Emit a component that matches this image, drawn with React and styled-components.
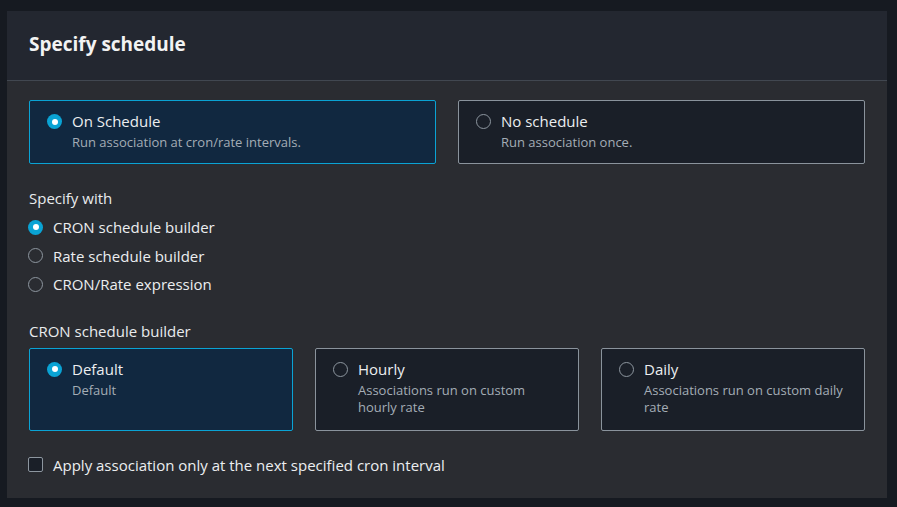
import React, { useState } from 'react'
import styled, { createGlobalStyle } from 'styled-components'

const GlobalStyle = createGlobalStyle`
  html, body {
    margin: 0;
    padding: 0;
    background: #161a21;
  }
  body {
    font-family: "Open Sans", "Noto Sans", sans-serif;
    color: #e9ebed;
  }
  * {
    box-sizing: border-box;
  }
`

const Page = styled.div`
  padding: 11px 10px 9px 7px;
  width: 897px;
  height: 507px;
`

const Panel = styled.section`
  width: 880px;
  height: 487px;
  background: #2a2c31;
  display: flex;
  flex-direction: column;
`

const Header = styled.header`
  height: 70px;
  padding: 0 22px 4px;
  display: flex;
  align-items: center;
  background: #232730;
  border-bottom: 1px solid #414750;
`

const Title = styled.h2`
  margin: 0;
  font-size: 19px;
  font-weight: 700;
  color: #f2f3f3;
`

const Body = styled.div`
  padding: 19px 22px 0;
  display: flex;
  flex-direction: column;
`

const CardRow = styled.div`
  display: grid;
  grid-template-columns: repeat(${p => p.$cols}, 1fr);
  gap: 22px;
`

const Card = styled.div`
  height: ${p => p.$height}px;
  padding: 9px 18px;
  display: flex;
  align-items: flex-start;
  gap: 10px;
  border: 1px solid ${p => (p.$selected ? '#0aa3d4' : '#8a939c')};
  border-radius: 2px;
  background: ${p => (p.$selected ? '#112840' : '#1a1f28')};
  cursor: pointer;
`

const RadioDot = styled.span`
  flex: none;
  width: 15px;
  height: 15px;
  margin-top: 4px;
  margin-left: -1px;
  border-radius: 50%;
  position: relative;
  border: ${p => (p.$checked ? 'none' : '1.5px solid #8d969f')};
  background: ${p => (p.$checked ? '#0aa3d4' : 'transparent')};

  &::after {
    content: '';
    display: ${p => (p.$checked ? 'block' : 'none')};
    position: absolute;
    left: 4.5px;
    top: 4.5px;
    width: 6px;
    height: 6px;
    border-radius: 50%;
    background: #ffffff;
  }
`

const CardText = styled.div`
  display: flex;
  flex-direction: column;
`

const CardLabel = styled.span`
  font-size: 15px;
  line-height: 22px;
  color: #eceef0;
`

const CardDesc = styled.span`
  margin-top: 2px;
  font-size: 13px;
  line-height: 17px;
  color: #a4adb6;
`

const FieldLabel = styled.div`
  font-size: 15px;
  line-height: 22px;
  color: #e9ebed;
  margin-top: ${p => p.$top}px;
  margin-bottom: ${p => p.$bottom}px;
`

const RadioList = styled.div`
  display: flex;
  flex-direction: column;
`

const RadioRow = styled.label`
  height: 28.5px;
  display: flex;
  align-items: center;
  gap: 10px;
  font-size: 15px;
  color: #eceef0;
  cursor: pointer;

  ${RadioDot} {
    margin-top: 0;
  }
`

const CheckRow = styled.label`
  margin-top: 23px;
  height: 22px;
  display: flex;
  align-items: center;
  gap: 10px;
  font-size: 15px;
  color: #eceef0;
  cursor: pointer;
`

const CheckBox = styled.span`
  flex: none;
  width: 15px;
  height: 15px;
  margin-left: -1px;
  border: 1.5px solid #8d969f;
  border-radius: 2px;
  background: #1a1f28;
`

const scheduleOptions = [
  { id: 'on', label: 'On Schedule', desc: 'Run association at cron/rate intervals.' },
  { id: 'none', label: 'No schedule', desc: 'Run association once.' },
]

const specifyOptions = [
  { id: 'cron', label: 'CRON schedule builder' },
  { id: 'rate', label: 'Rate schedule builder' },
  { id: 'expr', label: 'CRON/Rate expression' },
]

const builderOptions = [
  { id: 'default', label: 'Default', desc: 'Default' },
  { id: 'hourly', label: 'Hourly', desc: 'Associations run on custom hourly rate' },
  { id: 'daily', label: 'Daily', desc: 'Associations run on custom daily rate' },
]

const Tiles = ({ options, value, onChange, cols, height }) => (
  <CardRow $cols={cols}>
    {options.map(o => (
      <Card key={o.id} $selected={value === o.id} $height={height} onClick={() => onChange(o.id)}>
        <RadioDot $checked={value === o.id} />
        <CardText>
          <CardLabel>{o.label}</CardLabel>
          <CardDesc>{o.desc}</CardDesc>
        </CardText>
      </Card>
    ))}
  </CardRow>
)

const App = () => {
  const [schedule, setSchedule] = useState('on')
  const [specify, setSpecify] = useState('cron')
  const [builder, setBuilder] = useState('default')
  const [onlyNext, setOnlyNext] = useState(false)

  return (
    <Page>
      <GlobalStyle />
      <Panel>
        <Header>
          <Title>Specify schedule</Title>
        </Header>
        <Body>
          <Tiles options={scheduleOptions} value={schedule} onChange={setSchedule} cols={2} height={64} />

          <FieldLabel $top={23} $bottom={4}>Specify with</FieldLabel>
          <RadioList>
            {specifyOptions.map(o => (
              <RadioRow key={o.id} onClick={() => setSpecify(o.id)}>
                <RadioDot $checked={specify === o.id} />
                {o.label}
              </RadioRow>
            ))}
          </RadioList>

          <FieldLabel $top={21} $bottom={6}>CRON schedule builder</FieldLabel>
          <Tiles options={builderOptions} value={builder} onChange={setBuilder} cols={3} height={83} />

          <CheckRow onClick={() => setOnlyNext(!onlyNext)}>
            <CheckBox />
            Apply association only at the next specified cron interval
          </CheckRow>
        </Body>
      </Panel>
    </Page>
  )
}

export default App
